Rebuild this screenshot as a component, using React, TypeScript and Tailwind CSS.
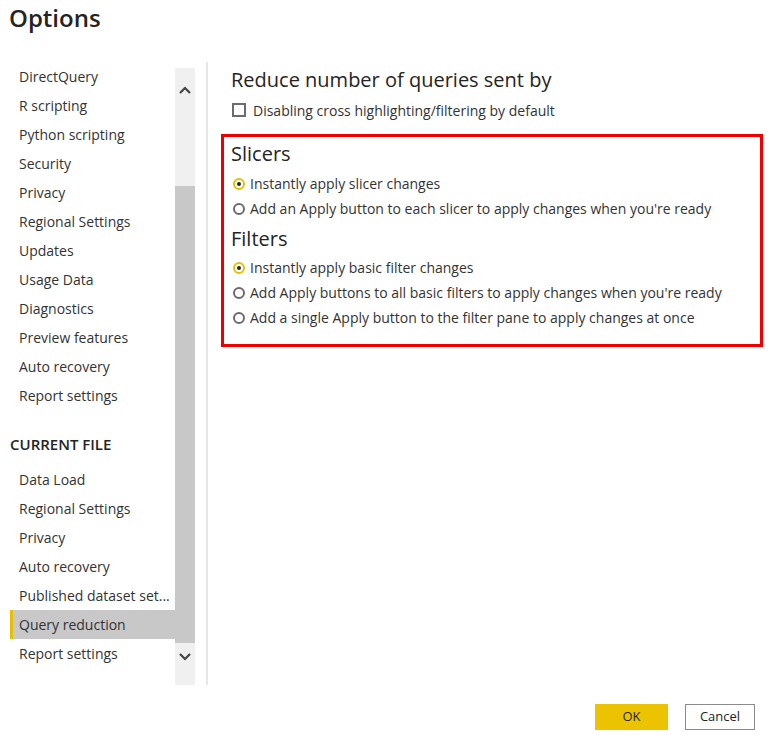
import React, { useState } from 'react';

const globalItems = [
  'DirectQuery',
  'R scripting',
  'Python scripting',
  'Security',
  'Privacy',
  'Regional Settings',
  'Updates',
  'Usage Data',
  'Diagnostics',
  'Preview features',
  'Auto recovery',
  'Report settings',
];

const fileItems = [
  'Data Load',
  'Regional Settings',
  'Privacy',
  'Auto recovery',
  'Published dataset set...',
  'Query reduction',
  'Report settings',
];

const Radio = ({ checked }: { checked: boolean }) => (
  <span
    className={
      'inline-flex items-center justify-center w-[12px] h-[12px] rounded-full border-2 bg-white ' +
      (checked ? 'border-[#e8c000]' : 'border-[#6b6b6b]')
    }
  >
    {checked && <span className="w-[4px] h-[4px] rounded-full bg-[#252423]" />}
  </span>
);

const RadioRow = ({ label, checked, onClick }: { label: string; checked: boolean; onClick: () => void }) => (
  <div onClick={onClick} className="flex items-center h-[25px] gap-[5px] pl-[2px] cursor-default">
    <Radio checked={checked} />
    <span className="text-[14px] text-[#333]">{label}</span>
  </div>
);

export default function App() {
  const [selected, setSelected] = useState('Query reduction');
  const [slicer, setSlicer] = useState(0);
  const [filter, setFilter] = useState(0);
  const [crossFilter, setCrossFilter] = useState(false);

  const item = (name: string, key: string) => {
    const active = selected === name && key === 'file';
    return (
      <div
        key={key + name}
        onClick={() => setSelected(name)}
        className={
          'h-[29px] flex items-center pl-[6px] text-[14px] text-[#333] whitespace-nowrap border-l-[3px] ' +
          (active ? 'bg-[#c8c8c8] border-[#e8c000]' : 'border-transparent')
        }
      >
        {name}
      </div>
    );
  };

  return (
    <div className="relative w-[768px] h-[735px] bg-white overflow-hidden" style={{ fontFamily: '"Open Sans", "Noto Sans", sans-serif' }}>
      <div className="pl-[9px] h-[62px] text-[24px] font-semibold text-[#252423]">Options</div>

      <div className="flex h-[623px]">
        {/* nav list */}
        <div className="w-[165px] ml-[10px]">
          {globalItems.map(n => item(n, 'global'))}
          <div className="mt-[20px] mb-[6px] h-[29px] flex items-center text-[15px] font-semibold text-[#252423]">CURRENT FILE</div>
          {fileItems.map(n => item(n, 'file'))}
        </div>

        {/* scrollbar */}
        <div className="w-[20px] mt-[6px] h-[617px] bg-[#f0f0f0] flex flex-col">
          <div className="h-[118px] flex items-start justify-center pt-[18px]">
            <svg width="12" height="8" viewBox="0 0 12 8">
              <path d="M1 7 L6 2 L11 7" fill="none" stroke="#444" strokeWidth="2.2" />
            </svg>
          </div>
          <div className="h-[457px] bg-[#c8c8c8]" />
          <div className="flex-1 flex items-start justify-center pt-[10px]">
            <svg width="12" height="8" viewBox="0 0 12 8">
              <path d="M1 1 L6 6 L11 1" fill="none" stroke="#444" strokeWidth="2.2" />
            </svg>
          </div>
        </div>

        {/* divider */}
        <div className="ml-[11px] w-[2px] bg-[#e6e6e6]" />

        {/* content */}
        <div className="flex-1 pl-[23px]">
          <div className="h-[36px] pt-[4px] text-[20px] text-[#252423] leading-[28px]">Reduce number of queries sent by</div>
          <div onClick={() => setCrossFilter(!crossFilter)} className="flex items-center h-[26px] gap-[7px] pl-[1px] mt-[-1px]">
            <span className="w-[14px] h-[14px] border-2 border-[#6b6b6b] bg-white" />
            <span className="text-[14px] text-[#333]">Disabling cross highlighting/filtering by default</span>
          </div>

          <div className="ml-[-10px] mt-[11px] w-[542px] h-[213px] border-[3px] border-[#ee0000] pl-[7px] pt-[3px]">
            <div className="h-[31px] text-[20px] leading-[28px] text-[#252423]">Slicers</div>
            <RadioRow label="Instantly apply slicer changes" checked={slicer === 0} onClick={() => setSlicer(0)} />
            <RadioRow label="Add an Apply button to each slicer to apply changes when you're ready" checked={slicer === 1} onClick={() => setSlicer(1)} />
            <div className="h-[34px] pt-[4px] text-[20px] leading-[28px] text-[#252423]">Filters</div>
            <RadioRow label="Instantly apply basic filter changes" checked={filter === 0} onClick={() => setFilter(0)} />
            <RadioRow label="Add Apply buttons to all basic filters to apply changes when you're ready" checked={filter === 1} onClick={() => setFilter(1)} />
            <RadioRow label="Add a single Apply button to the filter pane to apply changes at once" checked={filter === 2} onClick={() => setFilter(2)} />
          </div>
        </div>
      </div>

      {/* footer */}
      <div className="flex justify-end gap-[17px] pr-[13px] mt-[19px]">
        <button className="w-[73px] h-[26px] bg-[#ebc300] text-[13px] text-[#252423]">OK</button>
        <button className="w-[70px] h-[26px] bg-white border border-[#8a8a8a] text-[13px] text-[#252423]">Cancel</button>
      </div>
    </div>
  );
}
